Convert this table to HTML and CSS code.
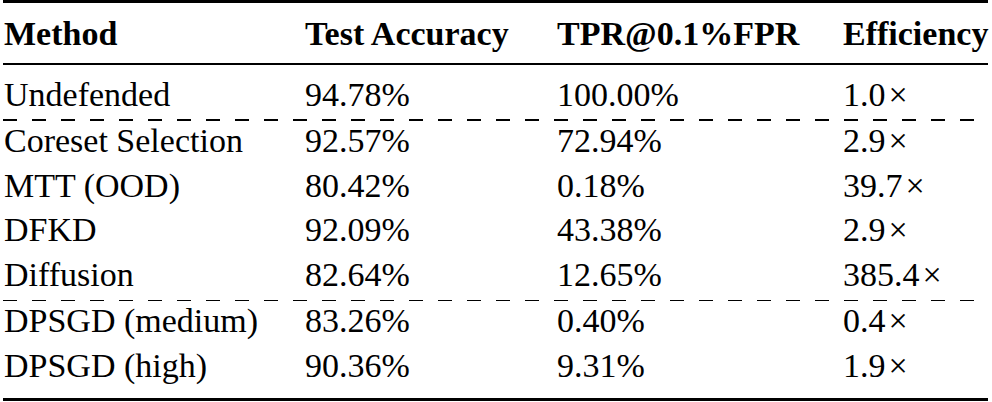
FILE: index.html
```html
<!DOCTYPE html>
<html>
<head>
<meta charset="utf-8">
<link rel="stylesheet" href="styles.css">
</head>
<body>
<div class="table">
  <div class="rule thick top"></div>
  <div class="row head">
    <div>Method</div><div>Test Accuracy</div><div>TPR@0.1%FPR</div><div>Efficiency</div>
  </div>
  <div class="rule mid"></div>
  <div class="tbody">
    <div class="row"><div>Undefended</div><div>94.78%</div><div>100.00%</div><div>1.0<span class="x">×</span></div></div>
    <div class="dash"></div>
    <div class="row"><div>Coreset Selection</div><div>92.57%</div><div>72.94%</div><div>2.9<span class="x">×</span></div></div>
    <div class="row"><div>MTT (OOD)</div><div>80.42%</div><div>0.18%</div><div>39.7<span class="x">×</span></div></div>
    <div class="row"><div>DFKD</div><div>92.09%</div><div>43.38%</div><div>2.9<span class="x">×</span></div></div>
    <div class="row"><div>Diffusion</div><div>82.64%</div><div>12.65%</div><div>385.4<span class="x">×</span></div></div>
    <div class="dash"></div>
    <div class="row"><div>DPSGD (medium)</div><div>83.26%</div><div>0.40%</div><div>0.4<span class="x">×</span></div></div>
    <div class="row"><div>DPSGD (high)</div><div>90.36%</div><div>9.31%</div><div>1.9<span class="x">×</span></div></div>
  </div>
  <div class="rule thick bottom"></div>
</div>
</body>
</html>
```
FILE: styles.css
```css
html, body {
  margin: 0;
  padding: 0;
  background: #fff;
}
body {
  width: 992px;
  height: 402px;
  overflow: hidden;
  color: #000;
}
.table {
  margin-left: 3px;
  width: 985px;
  display: flex;
  flex-direction: column;
  font-family: "Liberation Serif";
}
.rule {
  background: #000;
}
.rule.thick {
  height: 3px;
}
.rule.mid {
  height: 1.6px;
  margin-top: 4.9px;
}
.row {
  display: grid;
  grid-template-columns: 302px 252px 286px 1fr;
  font-size: 34px;
  line-height: 39.6px;
  padding-bottom: 5.1px;
  white-space: nowrap;
}
.row > div:first-child {
  padding-left: 1px;
}
.row.head {
  font-weight: bold;
  margin-top: 10.7px;
}
.tbody {
  margin-top: 9.9px;
  display: flex;
  flex-direction: column;
}
.x {
  margin-left: 3px;
}
.dash {
  height: 1.5px;
  background-image: repeating-linear-gradient(90deg, #000 0 14px, transparent 14px 29px);
}
.rule.bottom {
  margin-top: 7.8px;
}
```
